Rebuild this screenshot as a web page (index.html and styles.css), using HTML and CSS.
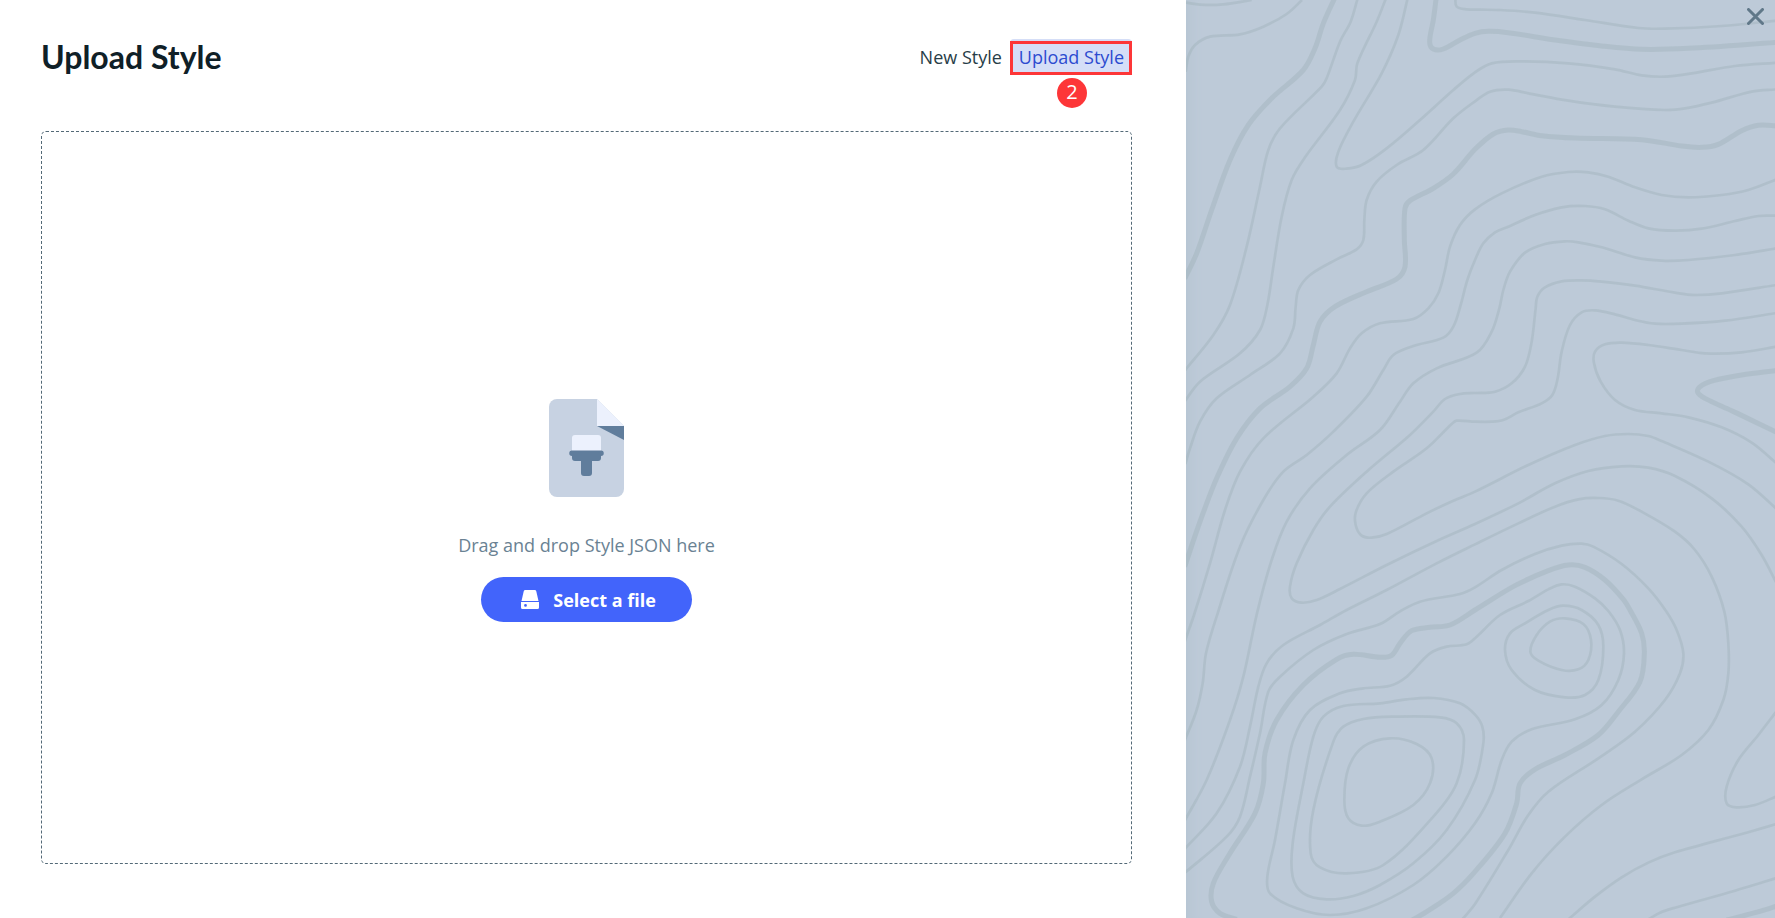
FILE: index.html
```html
<!DOCTYPE html>
<html lang="en">
<head>
<meta charset="utf-8">
<title>Upload Style</title>
<meta name="viewport" content="width=device-width, initial-scale=1">
<link rel="stylesheet" href="styles.css">
</head>
<body>
<div class="layout">
  <main class="panel">
    <header class="panel-header">
      <h1 class="title">Upload Style</h1>
      <nav class="tabs" aria-label="Style source">
        <button class="tab" type="button">New Style</button>
        <button class="tab tab-active" type="button">Upload Style<span class="marker" aria-hidden="true"></span><span class="badge">2</span></button>
      </nav>
    </header>
    <section class="dropzone">
      <svg class="file-icon" viewBox="0 0 75 98" aria-hidden="true">
        <path fill="#c7d2e2" d="M8 0H48L75 27V90a8 8 0 0 1-8 8H8a8 8 0 0 1-8-8V8a8 8 0 0 1 8-8Z"/>
        <path fill="#ecf1fd" d="M48 0 75 27H48Z"/>
        <path fill="#607d9c" d="M48 27H75V41Z"/>
        <path fill="#ecf1fd" d="M26 36h23a3 3 0 0 1 3 3v13H23V39a3 3 0 0 1 3-3Z"/>
        <path fill="#607d9c" d="M23 51.500H52a2.700 2.700 0 0 1 0 5.500v2a3 3 0 0 1-3 3h-6v12a3 3 0 0 1-3 3h-5a3 3 0 0 1-3-3V62h-6a3 3 0 0 1-3-3v-2a2.700 2.700 0 0 1 0-5.500Z"/>
      </svg>
      <p class="hint">Drag and drop Style JSON here</p>
      <button class="select-button" type="button">
        <svg class="drive-icon" viewBox="0 0 18 19" aria-hidden="true">
          <path fill="#fff" d="M4.200 0h9.600a1.500 1.500 0 0 1 1.400 1.100L17.500 11H.5L2.800 1.100A1.500 1.500 0 0 1 4.200 0Z"/>
          <path fill="#fff" fill-rule="evenodd" d="M0 12h18v5.500a1.500 1.500 0 0 1-1.500 1.500h-15A1.500 1.500 0 0 1 0 17.500Zm4.500 2a1.400 1.400 0 1 0 0 2.800 1.400 1.400 0 0 0 0-2.800Z"/>
        </svg>
        <span>Select a file</span>
      </button>
    </section>
  </main>
  <aside class="map">
    <svg class="contours" viewBox="18 0 1767 2754" preserveAspectRatio="xMinYMin slice" aria-hidden="true"></svg>
    <button class="close" type="button" aria-label="Close">
      <svg class="close-icon" viewBox="0 0 17 17" aria-hidden="true"><path d="M1.500 1.500 15.500 15.500M15.500 1.500 1.500 15.500"/></svg>
    </button>
  </aside>
</div>
<script src="contours.js"></script>
</body>
</html>
```

FILE: styles.css
```css
* {
  box-sizing: border-box;
}

body {
  margin: 0;
  font-family: "Open Sans", "Noto Sans", sans-serif;
  font-size: 18px;
  line-height: 24px;
  color: #273d47;
  background: #fff;
}

button {
  margin: 0;
  border: 0;
  font: inherit;
  color: inherit;
  background: none;
  cursor: pointer;
}

.layout {
  display: grid;
  grid-template-columns: 1186fr 589fr;
  min-height: 100vh;
}

.panel {
  display: flex;
  flex-direction: column;
  gap: 56px;
  padding: 39px 54px 54px 41px;
  background: #fff;
}

.panel-header {
  display: flex;
  align-items: flex-start;
  justify-content: space-between;
}

.title {
  margin: 0;
  font-family: Lato, sans-serif;
  font-size: 32px;
  font-weight: 700;
  line-height: 36px;
  color: #0f2027;
}

.tabs {
  display: flex;
}

.tab {
  position: relative;
  height: 36px;
  padding: 0 8px 0 9px;
  border-radius: 4px;
}

.tab-active {
  color: #2c4bd0;
  background: #d5def7;
}

.marker {
  position: absolute;
  inset: 2px 0 0;
  border: 3px solid #fd3638;
}

.badge {
  position: absolute;
  top: 39px;
  left: 50%;
  width: 30px;
  height: 30px;
  margin-left: -14px;
  border-radius: 50%;
  font-size: 20px;
  line-height: 28px;
  text-align: center;
  color: #fff;
  background: #fd3638;
}

.dropzone {
  flex: 1;
  display: flex;
  flex-direction: column;
  align-items: center;
  justify-content: center;
  padding-top: 26px;
  border: 1px dashed #536977;
  border-radius: 5px;
}

.file-icon {
  width: 75px;
  height: 98px;
}

.hint {
  margin: 36px 0 20px;
  color: #6a8293;
}

.select-button {
  display: flex;
  align-items: center;
  gap: 14px;
  height: 45px;
  padding: 0 36px 0 40px;
  border-radius: 23px;
  font-weight: 700;
  color: #fff;
  background: #4264fb;
}

.drive-icon {
  width: 18px;
  height: 19px;
}

.map {
  position: relative;
  overflow: hidden;
  background: #bdcad8;
  box-shadow: inset 16px 0 12px -12px #b6c5d2;
}

.contours {
  position: absolute;
  inset: 0;
  width: 100%;
  height: 100%;
  fill: none;
  stroke: #8fa6a8;
  stroke-opacity: 0.28;
}

.minor {
  stroke-width: 8;
}

.major {
  stroke-width: 15;
}

.close {
  position: absolute;
  top: 0;
  right: 4px;
  display: flex;
  align-items: center;
  justify-content: center;
  width: 32px;
  height: 33px;
  padding: 0;
}

.close-icon {
  width: 17px;
  height: 17px;
  fill: none;
  stroke: #607889;
  stroke-width: 3;
  stroke-linecap: round;
}
```

FILE: contours.js
```js
// Elevation lines of the map backdrop: "major" and "minor" are open lines, "ring" is closed.
const lines = [
  ["minor", "18,8 60,14 130,13 215,0"],
  ["minor", "366,0 320,42 250,80 180,103 90,110 45,135 25,170 17,215"],
  ["major", "466,-10 430,70 405,145 370,210 275,295 205,375 150,480 95,630 50,760 14,836"],
  ["minor", "533,-5 512,65 480,125 440,235 425,260 300,385 265,450 240,560 200,740 150,915 100,1005 14,1112"],
  ["minor", "618,-5 590,65 532,190 525,240 480,330 375,472 335,540 305,650 280,800 262,915 240,990 180,1060 60,1145 14,1204"],
  ["minor", "683,-5 655,105 605,220 520,365 475,455 470,500 500,506 545,495 620,445 720,360 820,270 885,217 935,190 1015,184 1165,190 1305,208 1385,226 1455,230 1535,220 1665,198 1790,188"],
  ["major", "769,-10 760,60 749,125 760,147 790,147 840,120 885,100 925,94 985,98 1125,120 1265,138 1385,148 1525,145 1790,127"],
  ["minor", "826,-5 830,20 860,28 900,29 960,30 1065,38 1215,60 1375,84 1455,86 1625,78 1790,62"],
  ["minor", "1790,268 1715,275 1595,308 1515,325 1455,330 1305,320 1165,302 1045,280 985,269 930,275 885,304 820,355 730,450 650,495 590,545 560,600 553,660 550,720 530,748 470,778 390,825 355,870 347,920 340,985 300,1060 210,1125 110,1195 60,1265 30,1345 16,1392"],
  ["major", "1795,378 1735,376 1685,392 1615,433 1565,442 1505,438 1385,419 1185,414 1085,407 1025,395 985,390 940,402 885,448 820,522 760,565 690,602 675,625 673,720 675,800 650,837 560,875 465,920 420,965 400,1035 380,1105 330,1160 240,1225 170,1315 110,1435 60,1565 14,1700"],
  ["minor", "1790,538 1705,570 1625,585 1525,592 1445,585 1365,562 1285,530 1225,517 1165,516 1085,530 965,580 885,628 840,675 810,740 795,810 775,880 745,925 700,957 600,970 545,1000 510,1045 470,1120 400,1190 250,1315 180,1415 135,1530 90,1690 42,1845 14,1925"],
  ["minor", "1790,647 1735,648 1665,663 1565,686 1485,692 1405,685 1345,662 1275,628 1215,618 1145,622 1065,645 985,680 945,697 910,730 885,780 862,840 842,915 820,980 790,1013 700,1038 640,1065 610,1110 560,1190 460,1295 380,1365 310,1415 250,1500 180,1640 113,1840 78,1960 68,2050 50,2130 14,2222"],
  ["minor", "1790,745 1665,765 1525,780 1445,782 1365,772 1265,742 1195,727 1155,724 1095,732 1035,758 990,815 970,870 958,925 935,995 890,1058 770,1105 700,1150 660,1205 600,1290 500,1365 390,1465 320,1565 275,1680 231,1840 190,2030 150,2160 80,2340 14,2462"],
  ["minor", "1790,855 1625,880 1545,885 1485,878 1365,857 1265,845 1205,841 1145,844 1095,862 1072,890 1067,925 1055,1025 1035,1100 995,1150 945,1175 885,1179 840,1182 795,1197 760,1235 690,1305 560,1415 450,1520 400,1590 350,1690 330,1760 335,1795 365,1808 410,1800 480,1767 620,1695 770,1623 885,1572 1015,1510 1125,1450 1225,1413 1325,1399 1405,1403 1485,1428 1595,1495 1685,1580 1745,1665 1790,1750"],
  ["minor", "1790,939 1635,962 1505,971 1425,971 1365,960 1305,943 1245,931 1205,937 1170,975 1145,1055 1133,1135 1117,1185 1085,1210 1015,1237 970,1260 935,1265 885,1265 830,1262 815,1272 740,1345 640,1415 560,1480 528,1535 527,1575 545,1607 575,1613 620,1602 740,1540 820,1502 885,1475 1045,1395 1185,1335 1275,1308 1345,1302 1405,1308 1445,1323 1585,1385 1705,1453 1790,1527"],
  ["minor", "1790,1040 1685,1057 1575,1060 1505,1050 1405,1035 1325,1028 1275,1033 1245,1055 1242,1090 1262,1145 1305,1200 1365,1230 1445,1240 1525,1252 1625,1282 1715,1328 1790,1390"],
  ["major", "1795,1111 1685,1125 1600,1142 1560,1160 1553,1177 1575,1195 1655,1232 1795,1299"],
  ["minor", "960,2754 1055,2620 1155,2510 1265,2415 1385,2338 1505,2265 1585,2190 1630,2100 1645,2020 1645,1930 1633,1835 1595,1730 1545,1650 1485,1595 1385,1535 1315,1502 1255,1494 1195,1498 1125,1520 1015,1570 885,1633 770,1690 620,1770 500,1830 420,1875 310,1935 260,1990 235,2060 210,2180 180,2300 110,2440 14,2547"],
  ["minor", "845,2760 885,2712 985,2550 1045,2445 1105,2375 1255,2275 1365,2195 1455,2100 1500,2020 1510,1960 1490,1890 1458,1833 1405,1765 1325,1692 1240,1640 1205,1631 1145,1637 1065,1662 965,1710 885,1762 840,1782 720,1805 660,1834 600,1872 500,1902 400,1950 300,2030 265,2075 240,2200 210,2330 180,2450 140,2510 14,2619"],
  ["major", "690,2764 740,2735 820,2680 885,2615 975,2500 1010,2410 1020,2350 1065,2308 1155,2265 1255,2205 1315,2135 1380,2045 1393,1960 1385,1900 1350,1830 1330,1798 1275,1740 1215,1702 1165,1695 1105,1712 1005,1757 885,1830 810,1875 750,1882 695,1892 660,1930 635,1966 600,1972 520,1963 470,1978 370,2055 290,2160 255,2260 250,2350 225,2440 150,2560 100,2650 95,2705 120,2740 170,2758"],
  ["ring", "960,1845 1045,1803 1105,1768 1145,1753 1185,1760 1245,1795 1285,1833 1320,1890 1332,1960 1315,2040 1265,2115 1185,2158 1055,2188 995,2225 965,2280 935,2380 885,2470 800,2570 700,2655 560,2725 450,2745 350,2725 270,2680 262,2630 285,2520 315,2350 340,2220 390,2130 480,2080 550,2065 630,2057 680,2030 750,1960 800,1940 860,1933 890,1910"],
  ["ring", "600,2110 680,2098 760,2094 840,2110 885,2144 907,2180 910,2230 885,2340 800,2490 700,2590 600,2655 520,2688 440,2698 370,2680 338,2630 338,2530 370,2350 400,2210 430,2150 490,2118"],
  ["ring", "640,2150 780,2152 830,2170 852,2220 830,2350 760,2450 610,2595 500,2620 420,2602 392,2560 400,2430 460,2225 490,2180 550,2157"],
  ["ring", "630,2215 710,2232 755,2275 750,2350 700,2415 600,2465 545,2477 505,2455 493,2400 505,2305 550,2240"],
  ["ring", "1155,1855 1210,1872 1233,1920 1225,1980 1195,2008 1145,2010 1075,1982 1051,1955 1070,1905 1110,1865"],
  ["ring", "1150,1817 1205,1830 1255,1875 1270,1940 1255,2040 1215,2085 1155,2092 1065,2070 995,2010 975,1950 990,1900 1035,1870 1105,1830"],
  ["minor", "1790,2133 1735,2205 1675,2280 1640,2360 1640,2410 1670,2422 1725,2415 1790,2389"],
  ["minor", "1790,2472 1685,2502 1485,2557 1405,2588 1325,2632 1245,2690 1165,2758"],
  ["minor", "1790,2634 1665,2672 1485,2723 1440,2738 1405,2758"],
  ["major", "1795,2717 1725,2738 1640,2760"]
];

// Catmull-Rom spline through the points, written as cubic segments.
function smooth(points, closed) {
  const n = points.length;
  const at = i => closed ? points[(i + n) % n] : points[Math.max(0, Math.min(n - 1, i))];
  let d = "M" + points[0];
  for (let i = 0; i < (closed ? n : n - 1); i++) {
    const [a, b, c, e] = [at(i - 1), at(i), at(i + 1), at(i + 2)];
    const span = Math.hypot(c[0] - b[0], c[1] - b[1]);
    const handle = (from, to) => {
      const dx = to[0] - from[0], dy = to[1] - from[1];
      const k = span / 3 / Math.hypot(dx, dy);
      return [dx * k, dy * k];
    };
    const h1 = handle(a, c), h2 = handle(b, e);
    d += `C${b[0] + h1[0]},${b[1] + h1[1]} ${c[0] - h2[0]},${c[1] - h2[1]} ${c}`;
  }
  return closed ? d + "Z" : d;
}

const svg = document.querySelector(".contours");
for (const [kind, data] of lines) {
  const points = data.split(" ").map(p => p.split(",").map(Number));
  const path = document.createElementNS("http://www.w3.org/2000/svg", "path");
  path.setAttribute("class", kind === "major" ? "major" : "minor");
  path.setAttribute("d", smooth(points, kind === "ring"));
  svg.append(path);
}
```
